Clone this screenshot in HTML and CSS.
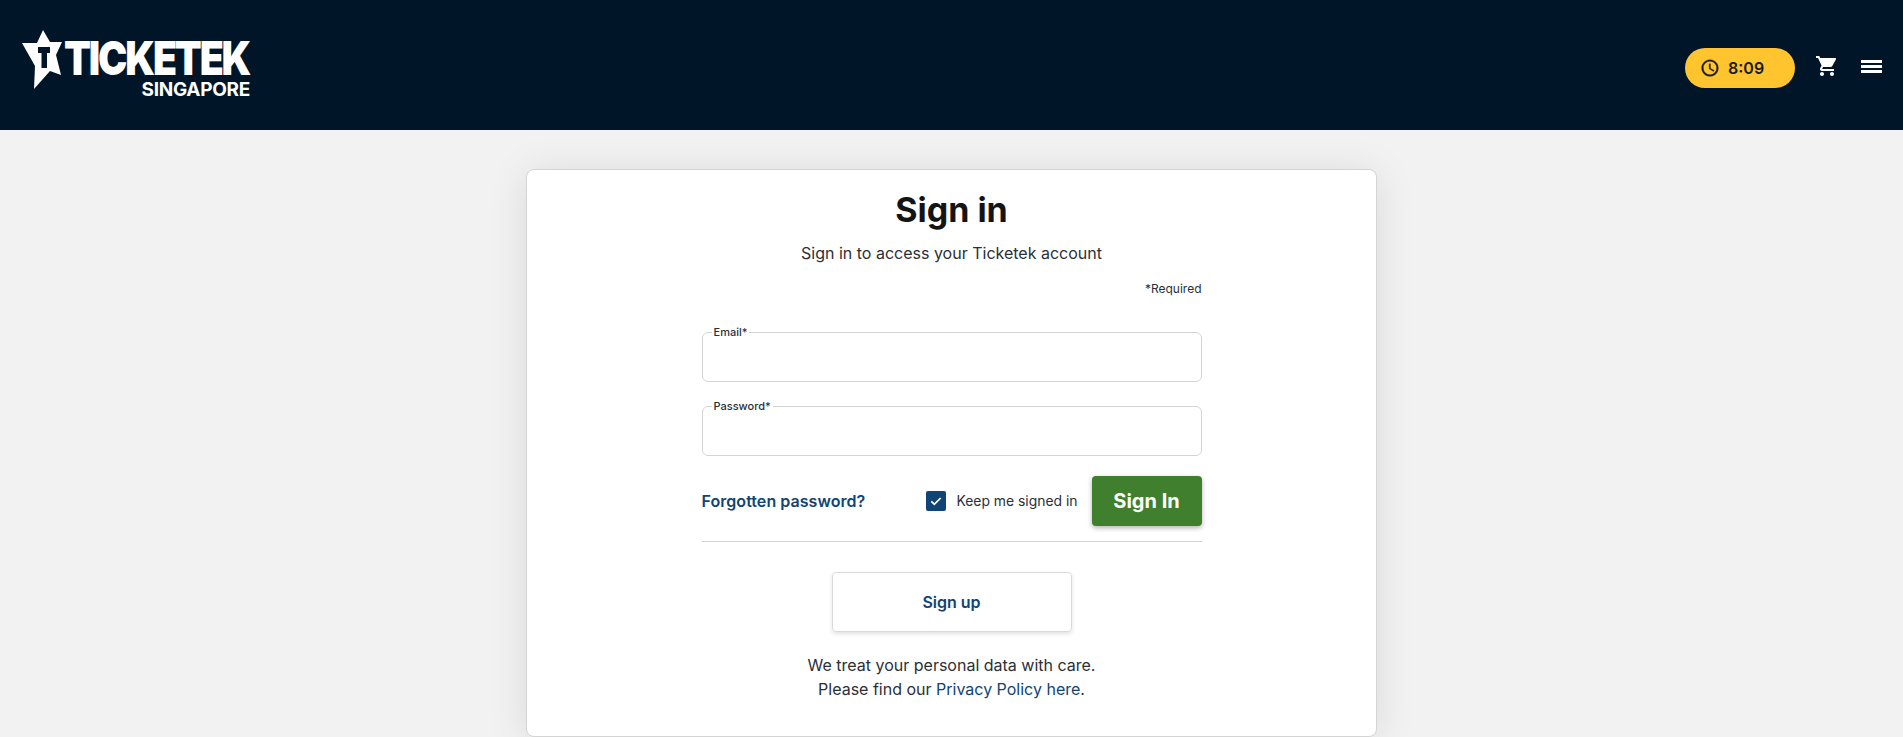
FILE: index.html
```html
<!DOCTYPE html>
<html lang="en">
<head>
    <meta charset="UTF-8">
    <title>Sign in | Ticketek Singapore</title>
    <link rel="stylesheet" href="styles.css">
</head>
<body>
    <header class="topbar">
        <a class="logo" href="#">
            <svg class="logo-star" viewBox="0 0 42 60" width="42" height="60">
                <polygon fill="#fff" points="21,0 28,12 40,12 34,25 39,45 28,41 12,59 13,36 0,13 15,13"/>
                <path fill="#001628" d="M16 17h12v6h-3v15h-5.500V23H16z"/>
            </svg>
            <div class="logo-words">
                <span class="logo-name">TICKETEK</span>
                <span class="logo-region">SINGAPORE</span>
            </div>
        </a>
        <div class="topbar-actions">
            <div class="timer">
                <svg viewBox="0 0 24 24" width="20" height="20"><path fill="#1a1a1a" stroke="#1a1a1a" stroke-width="0.4" d="M11.99 2C6.47 2 2 6.48 2 12s4.47 10 9.99 10C17.52 22 22 17.52 22 12S17.52 2 11.99 2zM12 20c-4.420 0-8-3.580-8-8s3.580-8 8-8 8 3.580 8 8-3.580 8-8 8zm.5-13H11v6l5.250 3.150.75-1.230-4.500-2.670z"/></svg>
                <span>8:09</span>
            </div>
            <svg class="cart" viewBox="0 0 24 24" width="24" height="24"><path fill="#fff" d="M7 18c-1.100 0-1.990.9-1.990 2S5.900 22 7 22s2-.9 2-2-.9-2-2-2zM1 2v2h2l3.600 7.590-1.350 2.450c-.16.280-.25.610-.25.960 0 1.100.9 2 2 2h12v-2H7.420c-.14 0-.25-.11-.25-.25l.03-.12.9-1.630h7.450c.75 0 1.410-.41 1.750-1.030l3.580-6.490A1 1 0 0 0 20 4H5.210l-.94-2H1zm16 16c-1.100 0-1.990.9-1.990 2s.89 2 1.990 2 2-.9 2-2-.9-2-2-2z"/></svg>
            <div class="burger"><span></span><span></span><span></span></div>
        </div>
    </header>

    <main class="page">
        <section class="card">
            <h1>Sign in</h1>
            <p class="intro">Sign in to access your Ticketek account</p>
            <form class="signin-form">
                <div class="required">*Required</div>
                <fieldset class="field field-first">
                    <legend>Email*</legend>
                    <input type="text">
                </fieldset>
                <fieldset class="field">
                    <legend>Password*</legend>
                    <input type="password">
                </fieldset>
                <div class="form-row">
                    <a class="forgot" href="#">Forgotten password?</a>
                    <label class="keep">
                        <span class="checkbox">
                            <svg viewBox="0 0 24 24" width="16" height="16"><path fill="none" stroke="#fff" stroke-width="2.6" d="M5 12.5l4.500 4.500L19 7.500"/></svg>
                        </span>
                        Keep me signed in
                    </label>
                    <button class="btn-signin" type="button">Sign In</button>
                </div>
            </form>
            <hr class="divider">
            <a class="btn-signup" href="#">Sign up</a>
            <p class="privacy">We treat your personal data with care.<br>Please find our <a href="#">Privacy Policy here</a>.</p>
        </section>
    </main>
</body>
</html>
```

FILE: styles.css
```css
* {
    box-sizing: border-box;
}
html, body {
    height: 100%;
}
body {
    margin: 0;
    background: #f2f2f2;
    font-family: Inter, "Liberation Sans", sans-serif;
    color: #2b2f36;
    overflow: hidden;
}
a {
    text-decoration: none;
}

.topbar {
    height: 130px;
    background: #001628;
    display: flex;
    align-items: center;
    justify-content: space-between;
    padding: 0 21px 0 22px;
}
.logo {
    display: flex;
    align-items: flex-start;
    color: #fff;
}
.logo-words {
    width: 186px;
    display: flex;
    flex-direction: column;
    align-items: flex-end;
    padding-top: 8px;
}
.logo-name {
    align-self: flex-start;
    white-space: nowrap;
    font-size: 47px;
    font-weight: 900;
    line-height: 40px;
    letter-spacing: -2.6px;
    transform: scaleX(0.836);
    transform-origin: left center;
}
.logo-region {
    font-size: 19px;
    font-weight: 700;
    line-height: 20px;
    letter-spacing: -0.3px;
    margin-top: 2px;
}

.topbar-actions {
    display: flex;
    align-items: center;
    margin-top: 6px;
}
.timer {
    width: 110px;
    height: 40px;
    border-radius: 20px;
    background: #ffc42e;
    color: #1a1a1a;
    display: flex;
    align-items: center;
    gap: 8px;
    padding-left: 15px;
    font-size: 16px;
    font-weight: 600;
}
.cart {
    margin: 0 0 4px 20px;
}
.burger {
    margin: 0 0 4px 22px;
    width: 21px;
    display: flex;
    flex-direction: column;
    gap: 2px;
}
.burger span {
    height: 3px;
    background: #fff;
}

.page {
    display: flex;
    justify-content: center;
    padding-top: 39px;
}
.card {
    width: 851px;
    height: 568px;
    background: #fff;
    border: 1px solid #d4d4d4;
    border-radius: 8px;
    box-shadow: 0 4px 40px rgba(0, 0, 0, 0.1);
    display: flex;
    flex-direction: column;
    align-items: center;
    padding-top: 19px;
}
.card h1 {
    margin: 0;
    font-size: 34px;
    line-height: 42px;
    font-weight: 700;
    color: #141414;
}
.intro {
    margin: 11px 0 0;
    font-size: 16px;
    line-height: 22px;
}
.signin-form {
    width: 500px;
}
.required {
    text-align: right;
    font-size: 12px;
    line-height: 14px;
    margin-top: 18px;
}
.field {
    margin: 18px 0 0;
    padding: 0 9px;
    height: 56px;
    border: 1px solid #d4d4d4;
    border-radius: 6px;
}
.field-first {
    margin-top: 30px;
}
.field legend {
    padding: 0 2px;
    font-size: 11px;
    line-height: 13px;
    font-weight: 500;
}
.field input {
    display: block;
    width: 100%;
    height: 40px;
    border: none;
    outline: none;
    font: inherit;
}
.form-row {
    display: flex;
    align-items: center;
    margin-top: 20px;
}
.forgot {
    font-size: 16px;
    font-weight: 600;
    letter-spacing: 0.05px;
    color: #0f4474;
    margin-right: auto;
}
.keep {
    display: flex;
    align-items: center;
    gap: 10px;
    font-size: 13.9px;
    margin-right: 14px;
}
.checkbox {
    width: 20px;
    height: 20px;
    border-radius: 2px;
    background: #0f4474;
    display: flex;
    align-items: center;
    justify-content: center;
}
.btn-signin {
    width: 110px;
    height: 50px;
    border: none;
    border-radius: 4px;
    background: #3f7f2d;
    color: #fff;
    font-family: inherit;
    font-size: 20px;
    font-weight: 700;
    box-shadow: 0 2px 5px rgba(0, 0, 0, 0.3);
}
.divider {
    width: 500px;
    margin: 15px 0 0;
    border: none;
    border-top: 1px solid #d4d4d4;
}
.btn-signup {
    margin-top: 30px;
    width: 240px;
    height: 60px;
    border: 1px solid #d9d9d9;
    border-radius: 4px;
    box-shadow: 0 2px 4px rgba(0, 0, 0, 0.12);
    display: flex;
    align-items: center;
    justify-content: center;
    font-size: 16px;
    font-weight: 600;
    color: #0f4474;
}
.privacy {
    margin: 21px 0 0;
    font-size: 16px;
    line-height: 24px;
    text-align: center;
}
.privacy a {
    color: #0f4474;
}
```
